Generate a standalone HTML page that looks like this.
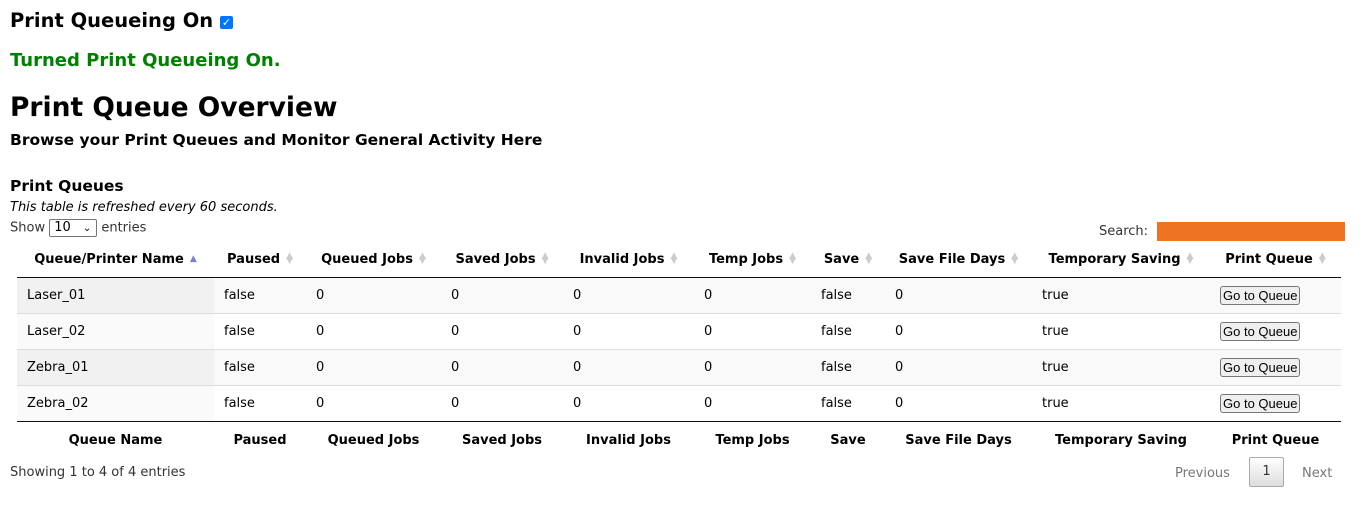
<!DOCTYPE html>
<html><head><style>
body{margin:0;width:1369px;height:524px;position:relative;font-family:"DejaVu Sans","Liberation Sans",sans-serif;color:#000;background:#fff;overflow:hidden}
.a{position:absolute;white-space:nowrap}
table{position:absolute;left:17px;top:241px;width:1324px;border-collapse:collapse;table-layout:fixed;font-size:13px}
th{font-weight:bold;font-size:13px;padding:0;height:36px;text-align:center;position:relative}
thead th{border-bottom:1px solid #111}
td{height:35px;padding:0 0 0 10px;border-top:1px solid #ddd}
tbody tr:nth-child(odd){background:#f9f9f9}
tbody tr:first-child td{border-top:none}
tbody tr:last-child td{border-bottom:1px solid #111}
td.s{background:#f1f1f1}
tbody tr:nth-child(even) td.s{background:#fafafa}
.ar{color:#ccc;font-size:9px;margin-left:6px;line-height:5px;display:inline-block;vertical-align:middle}
tfoot th{height:37px}
button{font-family:Arial,"Liberation Sans",sans-serif;font-size:13px;padding:0 2px;border:1px solid #767676;border-radius:3px;background:#efefef;height:19px}
</style></head><body>
<div class="a" style="left:10px;top:9px;font-size:19.5px;font-weight:bold">Print Queueing On <span style="display:inline-block;width:13px;height:13px;background:#0075ff;border-radius:2px;color:#fff;font-size:11px;line-height:13px;text-align:center;vertical-align:1px">✓</span></div>
<div class="a" style="left:10px;top:50px;font-size:18px;font-weight:bold;color:#008000">Turned Print Queueing On.</div>
<div class="a" style="left:10px;top:92px;font-size:26.5px;font-weight:bold">Print Queue Overview</div>
<div class="a" style="left:10px;top:131px;font-size:15.5px;font-weight:bold">Browse your Print Queues and Monitor General Activity Here</div>
<div class="a" style="left:10px;top:177px;font-size:15.5px;font-weight:bold">Print Queues</div>
<div class="a" style="left:10px;top:200px;font-size:13px;font-style:italic">This table is refreshed every 60 seconds.</div>
<div class="a" style="left:10px;top:219px;font-size:13px;color:#333">Show <span style="display:inline-block;height:16px;border:1px solid #767676;border-radius:2px;font-size:13px;vertical-align:middle;color:#000;line-height:16px;padding-left:4px;width:42px">10 <span style="font-size:10px;margin-left:8px">⌄</span></span> entries</div>
<div class="a" style="left:1099px;top:224px;font-size:13px;color:#333">Search:</div>
<div class="a" style="left:1157px;top:222px;width:188px;height:19px;background:#ee7322"></div>
<table>
<colgroup><col style="width:197px"><col style="width:92px"><col style="width:135px"><col style="width:122px"><col style="width:131px"><col style="width:117px"><col style="width:74px"><col style="width:147px"><col style="width:178px"><col style="width:131px"></colgroup>
<thead><tr>
<th>Queue/Printer Name<span class="ar" style="color:#7b7fd1">▲</span></th>
<th>Paused<span class="ar">▲<br>▼</span></th>
<th>Queued Jobs<span class="ar">▲<br>▼</span></th>
<th>Saved Jobs<span class="ar">▲<br>▼</span></th>
<th>Invalid Jobs<span class="ar">▲<br>▼</span></th>
<th>Temp Jobs<span class="ar">▲<br>▼</span></th>
<th>Save<span class="ar">▲<br>▼</span></th>
<th>Save File Days<span class="ar">▲<br>▼</span></th>
<th>Temporary Saving<span class="ar">▲<br>▼</span></th>
<th>Print Queue<span class="ar">▲<br>▼</span></th>
</tr></thead>
<tbody>
<tr><td class="s">Laser_01</td><td>false</td><td>0</td><td>0</td><td>0</td><td>0</td><td>false</td><td>0</td><td>true</td><td><button>Go to Queue</button></td></tr>
<tr><td class="s">Laser_02</td><td>false</td><td>0</td><td>0</td><td>0</td><td>0</td><td>false</td><td>0</td><td>true</td><td><button>Go to Queue</button></td></tr>
<tr><td class="s">Zebra_01</td><td>false</td><td>0</td><td>0</td><td>0</td><td>0</td><td>false</td><td>0</td><td>true</td><td><button>Go to Queue</button></td></tr>
<tr><td class="s">Zebra_02</td><td>false</td><td>0</td><td>0</td><td>0</td><td>0</td><td>false</td><td>0</td><td>true</td><td><button>Go to Queue</button></td></tr>
</tbody>
<tfoot><tr><th>Queue Name</th><th>Paused</th><th>Queued Jobs</th><th>Saved Jobs</th><th>Invalid Jobs</th><th>Temp Jobs</th><th>Save</th><th>Save File Days</th><th>Temporary Saving</th><th>Print Queue</th></tr></tfoot>
</table>
<div class="a" style="left:10px;top:465px;font-size:13px;color:#333">Showing 1 to 4 of 4 entries</div>
<div class="a" style="left:1175px;top:466px;font-size:13px;color:#777">Previous</div>
<div class="a" style="left:1249px;top:457px;width:35px;height:30px;border:1px solid #aaa;border-radius:2px;background:linear-gradient(#fff,#ddd);box-sizing:border-box;font-size:13px;text-align:center;line-height:28px;color:#333">1</div>
<div class="a" style="left:1302px;top:466px;font-size:13px;color:#777">Next</div>
</body></html>
